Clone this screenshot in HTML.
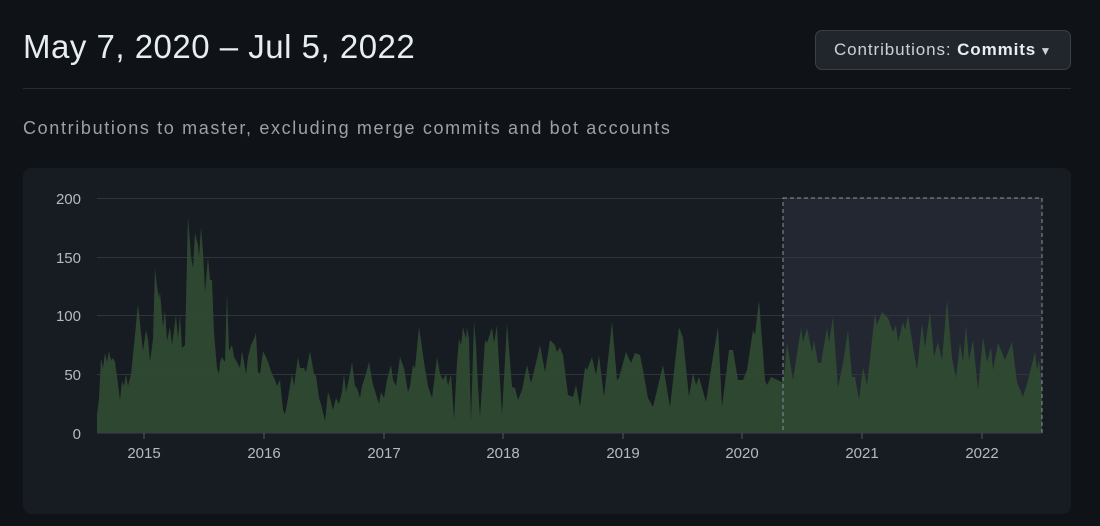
<!DOCTYPE html>
<html><head><meta charset="utf-8"><style>
body{margin:0;width:1100px;height:526px;background:#0f1217;font-family:"Liberation Sans",sans-serif;overflow:hidden;position:relative}
.t{position:absolute;left:23px;top:28px;font-size:33px;color:#e6edf3;letter-spacing:0.5px;white-space:nowrap}
.btn{position:absolute;left:815px;top:30px;width:256px;height:40px;box-sizing:border-box;border:1px solid #3a4048;border-radius:7px;background:#21262d;color:#c9d1d9;font-size:17px;line-height:38px;padding-left:18px;letter-spacing:0.9px;white-space:nowrap}
.btn b{color:#e6edf3;font-weight:bold}
.hr{position:absolute;left:23px;top:88px;width:1048px;height:1px;background:#262b32}
.s{position:absolute;left:23px;top:118px;font-size:18px;color:#9aa1aa;letter-spacing:1.65px;white-space:nowrap}
.card{position:absolute;left:23px;top:168px;width:1048px;height:346px;background:#171b22;border-radius:8px}
svg{position:absolute;left:0;top:0}
</style></head><body>
<div class="t">May 7, 2020 – Jul 5, 2022</div>
<div class="btn">Contributions: <b>Commits</b><span style="font-size:12px;letter-spacing:0"> ▼</span></div>
<div class="hr"></div>
<div class="s">Contributions to master, excluding merge commits and bot accounts</div>
<div class="card"></div>
<svg width="1100" height="526">
<rect x="783" y="198" width="259" height="235" fill="#222731"/>
<g stroke="#30353d" stroke-width="1">
<line x1="97" y1="198.5" x2="1042" y2="198.5"/><line x1="97" y1="257.5" x2="1042" y2="257.5"/><line x1="97" y1="315.5" x2="1042" y2="315.5"/><line x1="97" y1="374.5" x2="1042" y2="374.5"/>
</g>
<polygon fill="#2f4a33" fill-opacity="0.95" points="97,433 97,415 99,398 101,358 103,368 105,353 107,362 109,351 111,360 113,358 115,362 118,384 120,400 122,381 124,386 126,374 128,386 131,374 134,345 138,304 141,333 143,351 146,330 148,339 150,362 153,339 155,268 157,286 159,298 160,292 163,327 165,310 167,341 170,327 172,345 176,315 178,339 180,315 182,348 185,345 188,216 191,257 193,268 195,233 198,245 199,257 201,227 203,251 205,292 208,257 210,280 212,280 214,333 217,368 219,374 220,362 222,357 225,362 227,292 229,351 232,345 234,357 237,362 240,368 242,351 244,362 246,374 248,357 251,345 254,339 256,333 258,372 260,374 263,351 266,357 268,362 270,368 272,374 275,380 277,386 280,380 283,410 285,414 287,404 290,386 292,374 294,386 298,357 300,368 304,368 306,372 310,351 314,374 316,376 319,398 321,404 325,421 328,392 330,398 333,410 336,398 339,404 342,392 344,374 346,392 350,374 352,362 355,386 357,388 360,398 362,386 366,374 369,362 372,380 374,388 379,404 381,392 384,398 387,380 391,365 393,380 396,386 400,357 404,368 408,392 410,386 413,365 415,368 419,327 424,362 428,386 432,398 435,374 437,357 440,374 443,380 446,374 448,386 451,374 454,419 457,362 459,339 461,345 463,327 466,339 467,327 469,339 471,421 474,321 476,345 478,386 480,417 485,340 487,343 492,328 494,343 497,325 498,347 502,415 507,323 512,387 515,388 518,400 522,390 527,365 531,383 535,367 540,345 545,372 550,340 555,345 557,352 560,347 563,355 568,395 573,397 576,385 580,407 585,367 587,370 592,357 596,375 599,355 604,397 612,322 617,380 619,378 626,352 631,363 635,353 640,355 643,370 648,398 653,407 663,365 670,407 679,327 683,338 689,397 693,373 696,385 699,377 706,402 712,363 718,327 722,407 729,350 733,350 738,380 743,380 747,370 753,330 755,335 759,300 765,380 767,385 771,377 782,382 784,377 787,343 793,380 801,328 803,342 807,328 812,352 814,340 818,363 821,363 827,328 829,342 833,317 838,388 843,363 848,330 852,377 855,377 859,400 863,367 867,385 875,313 877,325 882,312 888,318 893,332 896,325 898,342 903,322 905,330 908,315 913,347 917,370 922,323 925,347 930,312 934,357 938,342 942,360 947,300 952,358 956,378 960,343 963,362 966,325 969,360 973,340 978,390 983,337 987,362 991,347 993,370 998,343 1005,360 1012,342 1017,382 1023,397 1028,380 1035,352 1037,370 1039,360 1041,380 1042,380 1042,433"/>
<rect x="783" y="198" width="259" height="235" fill="none" stroke="#8a9099" stroke-dasharray="4,3" stroke-width="1"/>
<line x1="97" y1="433" x2="1042" y2="433" stroke="#3a4048"/>
<g stroke="#555b63"><line x1="144" y1="433" x2="144" y2="439"/><line x1="264" y1="433" x2="264" y2="439"/><line x1="384" y1="433" x2="384" y2="439"/><line x1="503" y1="433" x2="503" y2="439"/><line x1="623" y1="433" x2="623" y2="439"/><line x1="742" y1="433" x2="742" y2="439"/><line x1="862" y1="433" x2="862" y2="439"/><line x1="982" y1="433" x2="982" y2="439"/></g>
<g fill="#b4bac2" font-family="Liberation Sans,sans-serif" font-size="15" text-anchor="end">
<text x="81" y="204">200</text><text x="81" y="263">150</text><text x="81" y="321">100</text><text x="81" y="380">50</text><text x="81" y="439">0</text>
</g>
<g fill="#b4bac2" font-family="Liberation Sans,sans-serif" font-size="15" text-anchor="middle">
<text x="144" y="458">2015</text><text x="264" y="458">2016</text><text x="384" y="458">2017</text><text x="503" y="458">2018</text><text x="623" y="458">2019</text><text x="742" y="458">2020</text><text x="862" y="458">2021</text><text x="982" y="458">2022</text>
</g>
</svg>
</body></html>
